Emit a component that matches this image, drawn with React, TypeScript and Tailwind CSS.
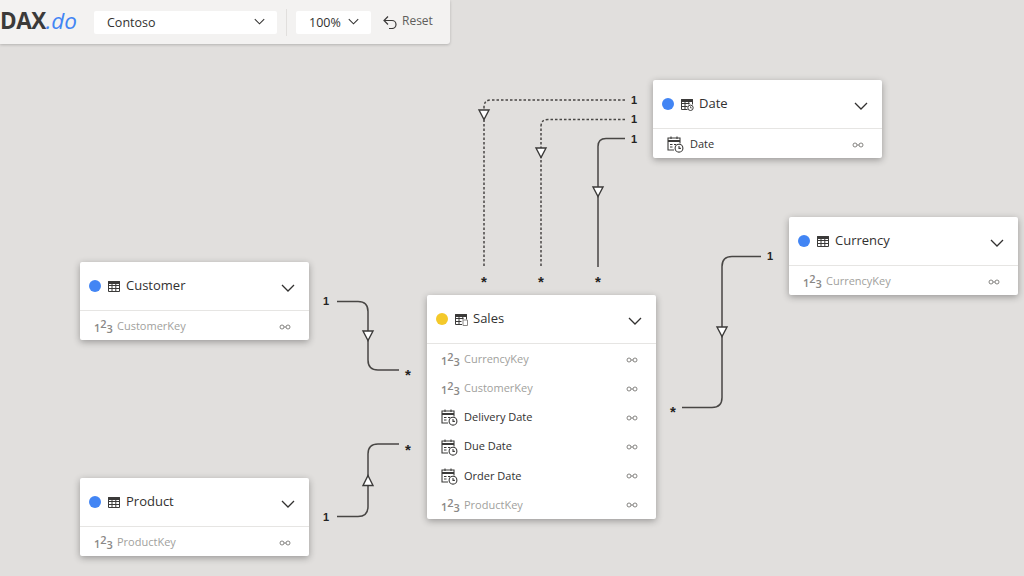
import React from 'react';

const font = "font-['Open_Sans','Noto_Sans',sans-serif]";

type Field = { name: string; kind: 'num' | 'date' };
type TableNode = {
  name: string;
  pos: string;
  height: string;
  dot: string;
  icon: 'table' | 'tableClock' | 'tableDoc';
  fields: Field[];
};

const tables: TableNode[] = [
  { name: 'Date', pos: 'left-[653px] top-[80px]', height: 'h-[78px]', dot: 'bg-[#4285f4]', icon: 'tableClock', fields: [{ name: 'Date', kind: 'date' }] },
  { name: 'Currency', pos: 'left-[789px] top-[217px]', height: 'h-[78px]', dot: 'bg-[#4285f4]', icon: 'table', fields: [{ name: 'CurrencyKey', kind: 'num' }] },
  { name: 'Customer', pos: 'left-[80px] top-[262px]', height: 'h-[78px]', dot: 'bg-[#4285f4]', icon: 'table', fields: [{ name: 'CustomerKey', kind: 'num' }] },
  { name: 'Product', pos: 'left-[80px] top-[478px]', height: 'h-[78px]', dot: 'bg-[#4285f4]', icon: 'table', fields: [{ name: 'ProductKey', kind: 'num' }] },
  {
    name: 'Sales',
    pos: 'left-[427px] top-[295px]',
    height: 'h-[224px]',
    dot: 'bg-[#f4c92a]',
    icon: 'tableDoc',
    fields: [
      { name: 'CurrencyKey', kind: 'num' },
      { name: 'CustomerKey', kind: 'num' },
      { name: 'Delivery Date', kind: 'date' },
      { name: 'Due Date', kind: 'date' },
      { name: 'Order Date', kind: 'date' },
      { name: 'ProductKey', kind: 'num' },
    ],
  },
];

// connector paths, drawn on the canvas
const lines = [
  { d: 'M625 100H491Q484 100 484 107V267', dashed: true },
  { d: 'M625 119.5H548Q541 119.5 541 126.5V267', dashed: true },
  { d: 'M625 138.5H606Q598 138.5 598 146.5V267', dashed: false },
  { d: 'M337 301.5H358Q368 301.5 368 311.5V360Q368 370 378 370H399', dashed: false },
  { d: 'M337 516.5H358Q368 516.5 368 506.5V454Q368 444 378 444H399', dashed: false },
  { d: 'M761 256.5H732Q722 256.5 722 266.5V397.5Q722 407.5 712 407.5H682', dashed: false },
];

const arrows = [
  '479,110 489,110 484,119.5',
  '536,148 546,148 541,157.5',
  '593,187 603,187 598,196.5',
  '363,331 373,331 368,340.5',
  '363,485.5 373,485.5 368,475.5',
  '717,327 727,327 722,336.5',
];

const marks = [
  { t: '1', pos: 'left-[631px] top-[91px]' },
  { t: '1', pos: 'left-[631px] top-[110px]' },
  { t: '1', pos: 'left-[631px] top-[130px]' },
  { t: '1', pos: 'left-[323px] top-[292px]' },
  { t: '1', pos: 'left-[323px] top-[508px]' },
  { t: '1', pos: 'left-[767px] top-[247px]' },
  { t: '*', pos: 'left-[481px] top-[273px]' },
  { t: '*', pos: 'left-[538px] top-[273px]' },
  { t: '*', pos: 'left-[595px] top-[273px]' },
  { t: '*', pos: 'left-[405px] top-[366px]' },
  { t: '*', pos: 'left-[405px] top-[441px]' },
  { t: '*', pos: 'left-[670px] top-[403px]' },
];

const Chevron = ({ className }: { className: string }) => (
  <svg viewBox="0 0 14 8" fill="none" stroke="currentColor" strokeWidth="1.3" className={className}>
    <path d="M1 1l6 6 6-6" />
  </svg>
);

const TableIcon = ({ kind }: { kind: TableNode['icon'] }) => (
  <svg viewBox="0 0 14 14" fill="none" stroke="#3b3a39" strokeWidth="1" className="w-[14px] h-[14px] shrink-0">
    <path d="M1.5 2.5h11v2h-11z" fill="#3b3a39" />
    {kind === 'table' && <path d="M1.5 2.5h11v10h-11zM1.5 6.5h11M1.5 9.5h11M5 4.5v8M8.8 4.5v8" />}
    {kind === 'tableClock' && (
      <>
        <path d="M7.5 12.5h-6v-10h11v5M1.5 6.5h8M1.5 9.5h6M5 4.5v8M8.8 4.5v3" />
        <circle cx="10.5" cy="10.8" r="2.7" fill="#fff" />
        <path d="M10.5 9.4v1.5h1.3" strokeWidth="0.8" />
      </>
    )}
    {kind === 'tableDoc' && (
      <>
        <path d="M8 12.5H1.5v-10h11v5M1.5 6.5h8M1.5 9.5h6M5 4.5v8M8.8 4.5v3" />
        <path d="M9 8h4.5v5.5H9z" fill="#fff" stroke="#8a8886" />
      </>
    )}
  </svg>
);

const DateIcon = () => (
  <svg viewBox="0 0 17 17" fill="none" stroke="#3b3a39" strokeWidth="1.1" className="w-[17px] h-[17px] shrink-0">
    <path d="M7 14H1v-12h12v5.5" />
    <path d="M1 5h12" strokeWidth="2" />
    <path d="M4 0.5v2.5M10 0.5v2.5" />
    <path d="M3 8.5h2.5M7 8.5h2M3 11h2.5" />
    <circle cx="12" cy="12.2" r="3.9" fill="#fff" />
    <path d="M12 10v2.4h1.9" />
  </svg>
);

const NumIcon = () => (
  <span className="inline-flex w-[17px] shrink-0 items-baseline text-[11px] leading-none font-semibold text-[#8a8886]">
    <span className="translate-y-[1px]">1</span>
    <span className="-translate-y-[3px]">2</span>
    <span className="translate-y-[2px]">3</span>
  </span>
);

const LinkIcon = () => (
  <svg viewBox="0 0 12 6" fill="none" stroke="#797775" strokeWidth="0.9" className="w-[12px] h-[6px] shrink-0">
    <circle cx="3" cy="3" r="2" />
    <circle cx="9" cy="3" r="2" />
    <path d="M5 3h2" />
  </svg>
);

const TableCard = ({ table }: { table: TableNode }) => (
  <div className={`absolute ${table.pos} ${table.height} w-[229px] flex flex-col bg-white rounded-[2px] shadow-[0_2px_7px_rgba(0,0,0,0.32)]`}>
    <div className="h-[49px] shrink-0 flex items-center pl-[9px] pr-[14px] border-b border-[#e6e5e3]">
      <span className={`w-[12px] h-[12px] rounded-full shrink-0 ${table.dot}`} />
      <span className="ml-[6px]"><TableIcon kind={table.icon} /></span>
      <span className="ml-[5px] text-[13px] text-[#323130]">{table.name}</span>
      <Chevron className="ml-auto mt-[3px] w-[14px] h-[8px] text-[#323130]" />
    </div>
    <div className="flex-1 flex flex-col">
      {table.fields.map((field) => (
        <div key={field.name} className="flex-1 flex items-center pt-[2px] pl-[14px] pr-[18px]">
          {field.kind === 'num' ? <NumIcon /> : <DateIcon />}
          <span className={`ml-[6px] -mt-[1px] text-[11px] ${field.kind === 'num' ? 'text-[#a19f9d]' : 'text-[#323130]'}`}>
            {field.name}
          </span>
          <span className="ml-auto"><LinkIcon /></span>
        </div>
      ))}
    </div>
  </div>
);

const Toolbar = () => (
  <div className="absolute left-0 top-0 w-[450px] h-[44px] flex items-center bg-[#f3f2f1] rounded-br-[3px] shadow-[0_1px_3px_rgba(0,0,0,0.2)]">
    <div className="w-[94px] shrink-0 -mt-[1px] text-[22.5px] leading-none tracking-[-0.5px]">
      <span className="font-bold text-[#3b3a39]">DAX</span>
      <span className="italic text-[#4285f4] tracking-[0px]">.do</span>
    </div>
    <div className="w-[183px] h-[23px] shrink-0 flex items-center justify-between pl-[13px] pr-[12px] bg-white rounded-[2px] text-[12.5px] text-[#323130]">
      <span className="mt-[3px]">Contoso</span>
      <Chevron className="w-[11px] h-[7px] -mt-[2px]" />
    </div>
    <div className="w-px h-[27px] mx-[9px] bg-[#e1dfdd]" />
    <div className="w-[75px] h-[23px] shrink-0 flex items-center justify-between pl-[13px] pr-[12px] bg-white rounded-[2px] text-[12.5px] text-[#323130]">
      <span className="mt-[3px]">100%</span>
      <Chevron className="w-[11px] h-[7px] -mt-[2px]" />
    </div>
    <div className="ml-[12px] flex items-center gap-[4px] text-[12px] text-[#605e5c]">
      <svg viewBox="0 0 15 14" fill="none" stroke="#3b3a39" strokeWidth="1.2" className="w-[15px] h-[14px]">
        <path d="M5 1.5L1 5.5l4 4M1 5.5h8a4 4 0 0 1 0 8H6" />
      </svg>
      <span className="-mt-[3px]">Reset</span>
    </div>
  </div>
);

export default function App() {
  return (
    <div className={`relative w-[1024px] h-[576px] overflow-hidden bg-[#e1dfdd] ${font}`}>
      <svg viewBox="0 0 1024 576" className="absolute inset-0 w-[1024px] h-[576px]" fill="none">
        {lines.map((line) => (
          <path
            key={line.d}
            d={line.d}
            stroke="#484644"
            strokeWidth="1.5"
            strokeDasharray={line.dashed ? '2.5 2' : undefined}
          />
        ))}
        {arrows.map((points) => (
          <polygon key={points} points={points} fill="#fff" stroke="#3b3a39" strokeWidth="1.4" />
        ))}
      </svg>
      {marks.map((mark) => (
        <span
          key={mark.pos}
          className={`absolute ${mark.pos} leading-[18px] font-bold text-[#252423] font-['Liberation_Sans',sans-serif] ${mark.t === '*' ? 'text-[15px]' : 'text-[11px]'}`}
        >
          {mark.t}
        </span>
      ))}
      {tables.map((table) => (
        <TableCard key={table.name} table={table} />
      ))}
      <Toolbar />
    </div>
  );
}
